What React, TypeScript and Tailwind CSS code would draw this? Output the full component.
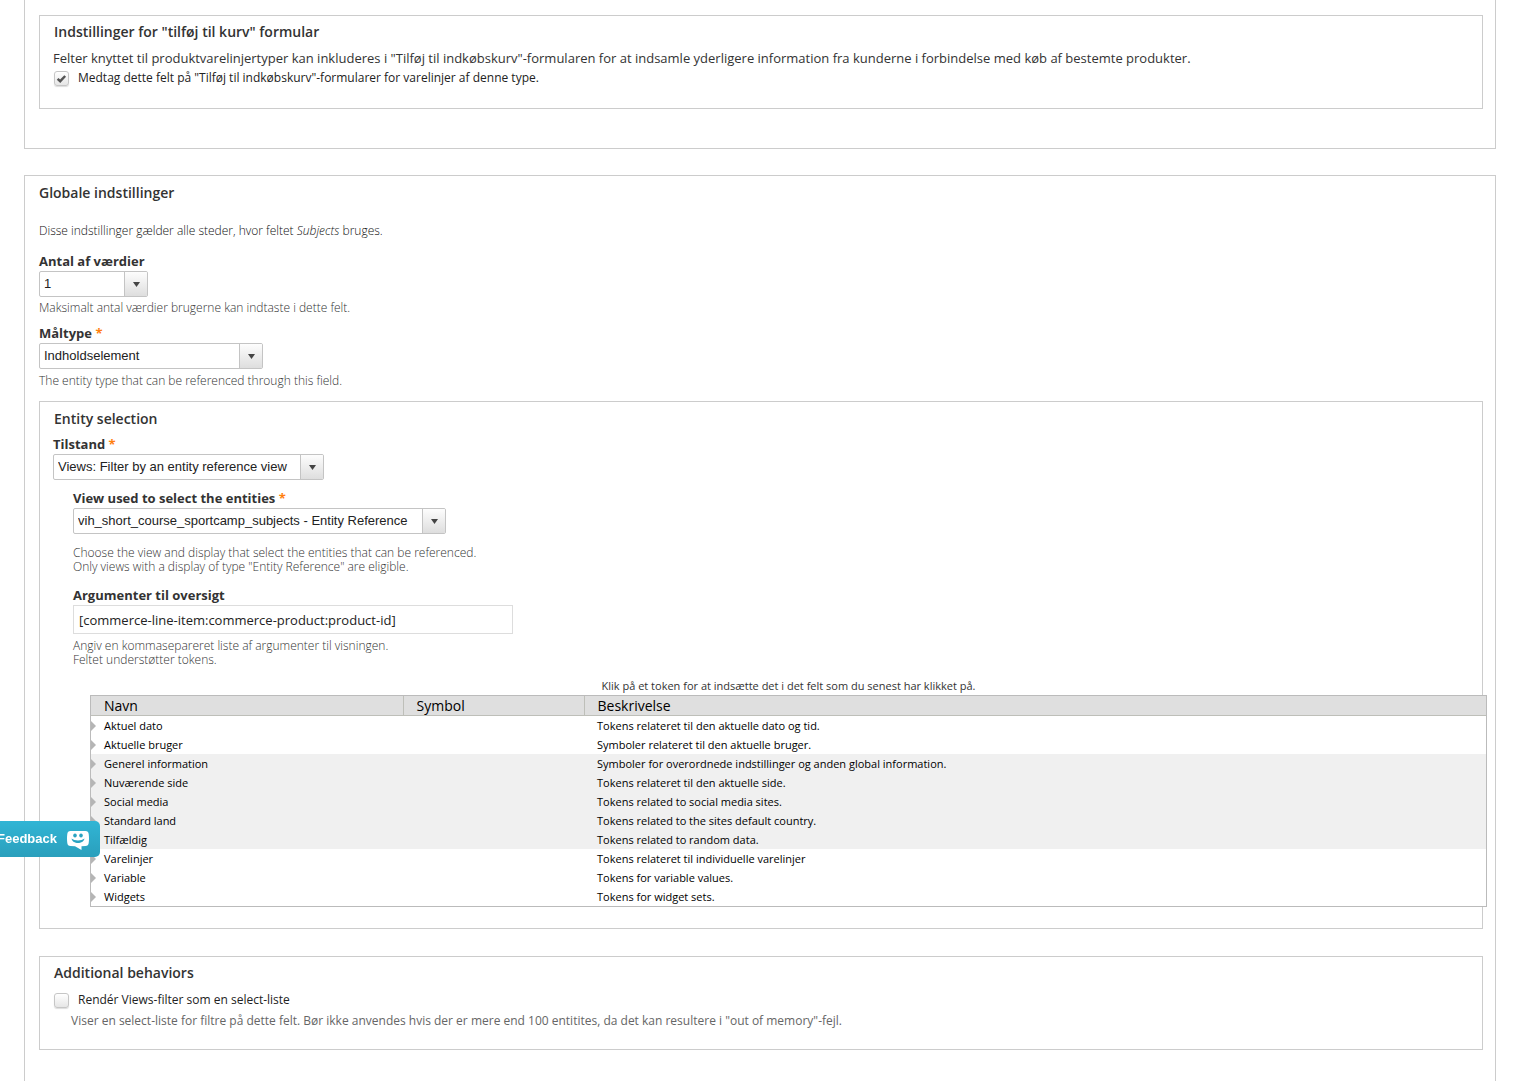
import type { ReactNode } from "react";

const TOKENS = [
  { name: "Aktuel dato", text: "Tokens relateret til den aktuelle dato og tid.", shaded: false },
  { name: "Aktuelle bruger", text: "Symboler relateret til den aktuelle bruger.", shaded: false },
  { name: "Generel information", text: "Symboler for overordnede indstillinger og anden global information.", shaded: true },
  { name: "Nuværende side", text: "Tokens relateret til den aktuelle side.", shaded: true },
  { name: "Social media", text: "Tokens related to social media sites.", shaded: true },
  { name: "Standard land", text: "Tokens related to the sites default country.", shaded: true },
  { name: "Tilfældig", text: "Tokens related to random data.", shaded: true },
  { name: "Varelinjer", text: "Tokens relateret til individuelle varelinjer", shaded: false },
  { name: "Variable", text: "Tokens for variable values.", shaded: false },
  { name: "Widgets", text: "Tokens for widget sets.", shaded: false },
];

function Title({ children }: { children: ReactNode }) {
  return <h2 className="text-[14px] leading-5 font-semibold text-[#333]">{children}</h2>;
}

function Label({ htmlFor, required, children }: { htmlFor: string; required?: boolean; children: ReactNode }) {
  return (
    <label htmlFor={htmlFor} className="block pb-px text-[13px] leading-[18px] font-bold text-[#333]">
      {children}
      {required && <span className="text-[#ff7f0e]"> *</span>}
    </label>
  );
}

function Help({ children }: { children: ReactNode }) {
  return <p className="text-[12px] leading-[14px] font-light text-[#333]">{children}</p>;
}

function Select({ id, value, width }: { id: string; value: string; width: string }) {
  return (
    <div className={`relative h-[26px] ${width}`}>
      <select
        id={id}
        defaultValue={value}
        className="block h-full w-full appearance-none rounded-[2px] border border-[#c4c4c4] bg-white pr-6 pb-px pl-1 font-['Liberation_Sans',Arial,sans-serif] text-[13px] text-[#222]"
      >
        <option value={value}>{value}</option>
      </select>
      <span className="pointer-events-none absolute inset-y-px right-px flex w-[23px] items-center justify-center rounded-r-[1px] border-l border-[#c4c4c4] bg-linear-to-b from-[#fdfdfd] to-[#dedede]">
        <svg width="7" height="5" viewBox="0 0 7 5" aria-hidden="true">
          <path d="M0 0h7L3.5 5z" fill="#444" />
        </svg>
      </span>
    </div>
  );
}

function Checkbox({ id, checked, label }: { id: string; checked?: boolean; label: string }) {
  return (
    <div className="flex h-5 items-center">
      <span className="relative ml-px h-[15px] w-[15px]">
        <input
          id={id}
          type="checkbox"
          defaultChecked={checked}
          className="peer block h-[15px] w-[15px] appearance-none rounded-[3px] border border-[#c6c6c6] bg-linear-to-b from-white to-[#e6e6e6] shadow-[0_1px_1px_#ddd]"
        />
        <svg
          className="pointer-events-none absolute inset-0 hidden peer-checked:block"
          width="15"
          height="15"
          viewBox="0 0 15 15"
          aria-hidden="true"
        >
          <path d="M3.6 7.8 6.2 10.2 11.2 5" fill="none" stroke="#555" strokeWidth="2.4" />
        </svg>
      </span>
      <label htmlFor={id} className="pl-[9px] text-[12px] leading-5 text-[#222]">
        {label}
      </label>
    </div>
  );
}

export default function App() {
  return (
    <div className="flex min-h-screen flex-col bg-white pr-[17px] pl-6 font-['Open_Sans',sans-serif] text-[#333]">
      <section className="border border-t-0 border-[#ccc] pt-[15px] pr-3 pb-[39px] pl-[14px]">
        <div className="border border-[#ccc] px-[13px] pt-[6px] pb-5">
          <div className="pl-px">
            <Title>Indstillinger for "tilføj til kurv" formular</Title>
          </div>
          <p className="mt-[6px] text-[13px] leading-5">
            Felter knyttet til produktvarelinjertyper kan inkluderes i "Tilføj til indkøbskurv"-formularen for at
            indsamle yderligere information fra kunderne i forbindelse med køb af bestemte produkter.
          </p>
          <Checkbox
            id="cart"
            checked
            label={'Medtag dette felt på "Tilføj til indkøbskurv"-formularer for varelinjer af denne type.'}
          />
        </div>
      </section>

      <section className="mt-[26px] flex-1 border border-b-0 border-[#ccc] pt-[7px] pr-3 pl-[14px]">
        <Title>Globale indstillinger</Title>
        <p className="mt-[18px] mb-[11px] text-[12px] leading-5 font-light text-[#111]">
          Disse indstillinger gælder alle steder, hvor feltet <em>Subjects</em> bruges.
        </p>

        <Label htmlFor="count">Antal af værdier</Label>
        <Select id="count" value="1" width="w-[109px]" />
        <div className="mt-1 mb-[9px]">
          <Help>Maksimalt antal værdier brugerne kan indtaste i dette felt.</Help>
        </div>

        <Label htmlFor="target" required>
          Måltype
        </Label>
        <Select id="target" value="Indholdselement" width="w-[224px]" />
        <div className="mt-[5px] mb-[13px]">
          <Help>The entity type that can be referenced through this field.</Help>
        </div>

        <div className="border border-[#ccc] px-[13px] pt-[7px] pb-[21px]">
          <div className="pl-px">
            <Title>Entity selection</Title>
          </div>
          <div className="mt-[6px]">
            <Label htmlFor="mode" required>
              Tilstand
            </Label>
            <Select id="mode" value="Views: Filter by an entity reference view" width="w-[271px]" />
          </div>

          <div className="mt-[9px] pl-5">
            <Label htmlFor="view" required>
              View used to select the entities
            </Label>
            <Select id="view" value="vih_short_course_sportcamp_subjects - Entity Reference" width="w-[373px]" />
            <div className="my-3">
              <Help>
                Choose the view and display that select the entities that can be referenced.
                <br />
                Only views with a display of type "Entity Reference" are eligible.
              </Help>
            </div>

            <Label htmlFor="args">Argumenter til oversigt</Label>
            <input
              id="args"
              type="text"
              defaultValue="[commerce-line-item:commerce-product:product-id]"
              className="block h-[29px] w-[440px] border border-[#ddd] bg-white px-[5px] text-[13px] text-[#222]"
            />
            <div className="mt-[5px] mb-[10px]">
              <Help>
                Angiv en kommasepareret liste af argumenter til visningen.
                <br />
                Feltet understøtter tokens.
              </Help>
            </div>

            <div className="-mr-[18px] ml-[17px]">
              <p className="text-center text-[11px] leading-[18px]">
                Klik på et token for at indsætte det i det felt som du senest har klikket på.
              </p>
              <div className="border border-[#bbb] bg-white">
                <table className="w-full table-fixed border-collapse text-left text-[11px] leading-[19px] text-black">
                  <colgroup>
                    <col className="w-[312px]" />
                    <col className="w-[181px]" />
                    <col />
                  </colgroup>
                  <thead>
                    <tr className="border-b border-[#bebfb9] bg-[#dfdfdf] text-[14px]">
                      <th className="border-r border-[#bebfb9] py-0 pl-[13px] font-normal">Navn</th>
                      <th className="border-r border-[#bebfb9] py-0 pl-[13px] font-normal">Symbol</th>
                      <th className="py-0 pl-[13px] font-normal">Beskrivelse</th>
                    </tr>
                  </thead>
                  <tbody>
                    {TOKENS.map((t) => (
                      <tr key={t.name} className={t.shaded ? "bg-[#f0f0f0]" : "bg-white"}>
                        <td className="p-0">
                          <div className="flex h-[19px] items-center gap-2">
                            <svg width="5" height="10" viewBox="0 0 5 10" aria-hidden="true">
                              <path d="M0 0 5 5 0 10z" fill="#b5b5b5" />
                            </svg>
                            {t.name}
                          </div>
                        </td>
                        <td className="p-0" />
                        <td className="py-0 pr-0 pl-[13px]">{t.text}</td>
                      </tr>
                    ))}
                  </tbody>
                </table>
              </div>
            </div>
          </div>
        </div>

        <div className="mt-[27px] border border-[#ccc] px-[13px] pt-[6px] pb-[21px]">
          <div className="pl-px">
            <Title>Additional behaviors</Title>
          </div>
          <div className="mt-[7px] mb-1">
            <Checkbox id="render" label="Rendér Views-filter som en select-liste" />
          </div>
          <p className="pl-[18px] text-[12px] leading-[14px] text-[#666]">
            Viser en select-liste for filtre på dette felt. Bør ikke anvendes hvis der er mere end 100 entitites, da
            det kan resultere i "out of memory"-fejl.
          </p>
        </div>
      </section>

      <button
        type="button"
        className="fixed bottom-[224px] left-0 flex h-9 w-[100px] items-center justify-end gap-[10px] rounded-r-[5px] bg-linear-to-b from-[#31b5d5] to-[#2a9fbc] pr-[11px] font-['Liberation_Sans',Arial,sans-serif] text-[13px] font-bold text-white"
      >
        <span>Feedback</span>
        <svg className="mt-[3px] shrink-0" width="22" height="19" viewBox="0 0 22 19" aria-hidden="true">
          <path
            d="M3.500 0C8 -.2 14 -.2 18.500 0 20.500.1 21.500 1.200 21.700 3c.4 3 .4 6 0 9-.2 1.800-1.200 2.900-3.200 3l-4 .2V19L8 15.300 3.500 15C1.500 14.900.5 13.800.3 12c-.4-3-.4-6 0-9C.5 1.200 1.500.1 3.500 0z"
            fill="#fff"
          />
          <ellipse cx="8" cy="4.500" rx="1.800" ry="2" fill="#2aa3c1" />
          <ellipse cx="14" cy="4.500" rx="1.800" ry="2" fill="#2aa3c1" />
          <path d="M4.500 7.500c1 6 12 6 13 0-3 2.600-10 2.600-13 0z" fill="#2aa3c1" />
        </svg>
      </button>
    </div>
  );
}
